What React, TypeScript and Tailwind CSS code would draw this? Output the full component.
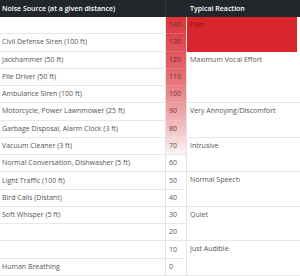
const sources = [
  '',
  'Civil Defense Siren (100 ft)',
  'Jackhammer (50 ft)',
  'Pile Driver (50 ft)',
  'Ambulance Siren (100 ft)',
  'Motorcycle, Power Lawnmower (25 ft)',
  'Garbage Disposal, Alarm Clock (3 ft)',
  'Vacuum Cleaner (3 ft)',
  'Normal Conversation, Dishwasher (5 ft)',
  'Light Traffic (100 ft)',
  'Bird Calls (Distant)',
  'Soft Whisper (5 ft)',
  '',
  '',
  'Human Breathing',
]

const levels = [140, 130, 120, 110, 100, 90, 80, 70, 60, 50, 40, 30, 20, 10, 0]

const reactions = [
  { label: 'Pain', span: 2 },
  { label: 'Maximum Vocal Effort', span: 3 },
  { label: 'Very Annoying/Discomfort', span: 2 },
  { label: 'Intrusive', span: 2 },
  { label: 'Normal Speech', span: 2 },
  { label: 'Quiet', span: 2 },
  { label: 'Just Audible', span: 2 },
]

const spanClass: Record<number, string> = {
  2: 'row-span-2',
  3: 'row-span-3',
}

export default function App() {
  let start = 2
  return (
    <div
      className="w-[300px] h-[276px] bg-white text-[7px] leading-[10px] text-[#555] overflow-hidden"
      style={{ fontFamily: '"Open Sans", sans-serif' }}
    >
      <div className="grid grid-cols-[165px_22px_1fr] grid-rows-[17px_repeat(15,1fr)] h-full">
        {/* header */}
        <div className="bg-[#23262b] text-white font-semibold flex items-center pl-[2px] col-start-1 row-start-1 whitespace-nowrap">
          Noise Source (at a given distance)
        </div>
        <div className="bg-[#23262b] border-l border-[#34373c] col-start-2 row-start-1" />
        <div className="bg-[#23262b] text-white font-semibold flex items-center pl-[3px] col-start-3 row-start-1">
          Typical Reaction
        </div>

        {sources.map((s, i) => (
          <div
            key={i}
            style={{ gridRowStart: i + 2 }}
            className="col-start-1 flex items-center pl-[2px] border-b border-[#e8e8e8] whitespace-nowrap"
          >
            {s}
          </div>
        ))}

        {/* dB column with gradient */}
        <div className="col-start-2 row-start-2 row-span-15 grid grid-rows-subgrid border-l border-r border-[#e4e4e4] bg-[linear-gradient(to_bottom,#dc343a_0%,#e36a6f_22%,#f2bcbf_42%,#ffffff_55%,#ffffff_100%)]">
          {levels.map((l, i) => (
            <div
              key={l}
              className={
                'flex items-center pl-[3px] border-b ' +
                (i < 7 ? 'border-[#ffffff]/15 text-[#6a3336]' : 'border-[#e8e8e8] text-[#555]')
              }
            >
              {l}
            </div>
          ))}
        </div>

        {reactions.map((r, i) => {
          const rowStart = start
          start += r.span
          return (
            <div
              key={r.label}
              style={{ gridRowStart: rowStart }}
              className={
                'col-start-3 pl-[3px] border-b flex items-start pt-[3px] whitespace-nowrap ' +
                spanClass[r.span] +
                (i === 0
                  ? ' bg-[#d9262c] text-[#7a1518] mr-[3px] border-[#d9262c]'
                  : ' border-[#e8e8e8]')
              }
            >
              {r.label}
            </div>
          )
        })}
      </div>
    </div>
  )
}
